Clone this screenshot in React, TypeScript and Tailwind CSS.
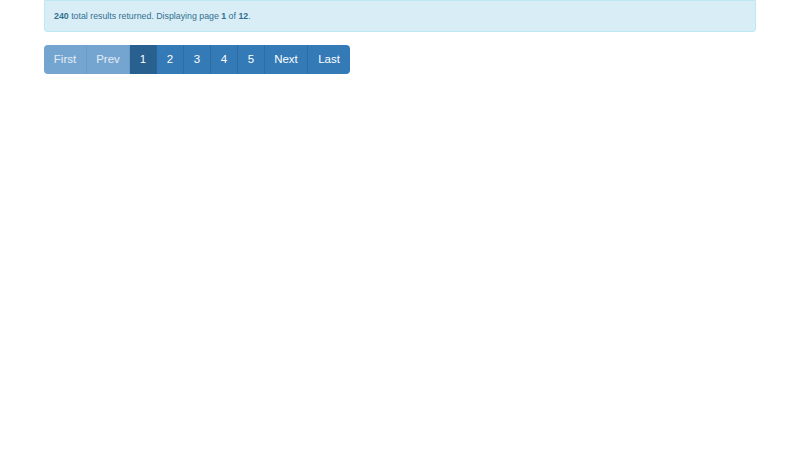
import React from 'react';

const pages = ['1', '2', '3', '4', '5'];

export default function App() {
  return (
    <div className="min-h-[450px] bg-white font-['Liberation_Sans',Arial,sans-serif]">
      <div className="ml-[44px] w-[712px]">
        {/* Result summary */}
        <div className="h-[32px] flex items-center px-[9px] pt-[2px] bg-[#d9edf7] border border-[#bce8f1] rounded-b-[3px] text-[#31708f] text-[8.8px]">
          <span>
            <b>240</b> total results returned. Displaying page <b>1</b> of <b>12</b>.
          </span>
        </div>

        {/* Pagination */}
        <div className="mt-[13px] inline-flex h-[29px] rounded-[4px] overflow-hidden text-[11.5px] text-white">
          <span className="w-[43px] flex items-center justify-center pt-[1px] bg-[#74a5d0] border-r border-[#6b9cc8] text-white/80">First</span>
          <span className="w-[43px] flex items-center justify-center pt-[1px] bg-[#74a5d0] border-r border-[#6b9cc8] text-white/80">Prev</span>
          {pages.map((p) => (
            <span
              key={p}
              className={
                p === '1'
                  ? 'w-[27px] flex items-center justify-center pt-[1px] bg-[#286090] border-r border-[#2a6496]'
                  : 'w-[27px] flex items-center justify-center pt-[1px] bg-[#337ab7] border-r border-[#2e6da4]'
              }
            >
              {p}
            </span>
          ))}
          <span className="w-[43px] flex items-center justify-center pt-[1px] bg-[#337ab7] border-r border-[#2e6da4]">Next</span>
          <span className="w-[42px] flex items-center justify-center pt-[1px] bg-[#337ab7]">Last</span>
        </div>
      </div>
    </div>
  );
}
